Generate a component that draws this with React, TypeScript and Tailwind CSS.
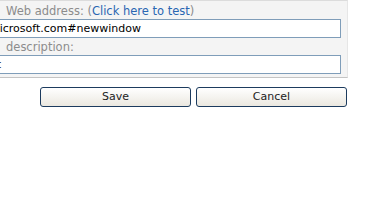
import React from "react";

const font = { fontFamily: '"DejaVu Sans", Verdana, sans-serif' };

function Field({ label, value, shift }: { label: React.ReactNode; value: string; shift: string }) {
  return (
    <div className="flex flex-col">
      <div className="h-[17px] pl-[6px] pt-[3px] text-[11.5px] leading-[13px] text-[#8c8c8c] whitespace-nowrap">
        {label}
      </div>
      <div className="h-[19px] w-[342px] -ml-px border border-[#7f9db9] bg-white overflow-hidden">
        <div className={`text-[11px] leading-[17px] text-black whitespace-nowrap ${shift}`}>{value}</div>
      </div>
    </div>
  );
}

export default function App() {
  return (
    <div className="w-[384px] h-[202px] bg-white overflow-hidden" style={font}>
      <div className="w-[348px] h-[78px] bg-[#f4f4f4] border-t border-t-[#dcdcdc] border-r border-r-[#e6e6e6] border-b border-b-[#c4c4c4] pt-px">
        <Field
          label={
            <>
              Web address: (<span className="text-[#2a66b2]">Click here to test</span>)
            </>
          }
          value="microsoft.com#newwindow"
          shift="-ml-[11px]"
        />
        <Field label=" description:" value="Microsoft" shift="-ml-[49px]" />
      </div>
      <div className="flex gap-[5px] pl-[40px] pt-[9px]">
        {["Save", "Cancel"].map((t) => (
          <button
            key={t}
            className="w-[151px] h-[20px] rounded-[3px] border border-[#1c3b5e] bg-gradient-to-b from-white to-[#ebe8e0] text-[11px] text-[#222]"
            style={font}
          >
            {t}
          </button>
        ))}
      </div>
    </div>
  );
}
